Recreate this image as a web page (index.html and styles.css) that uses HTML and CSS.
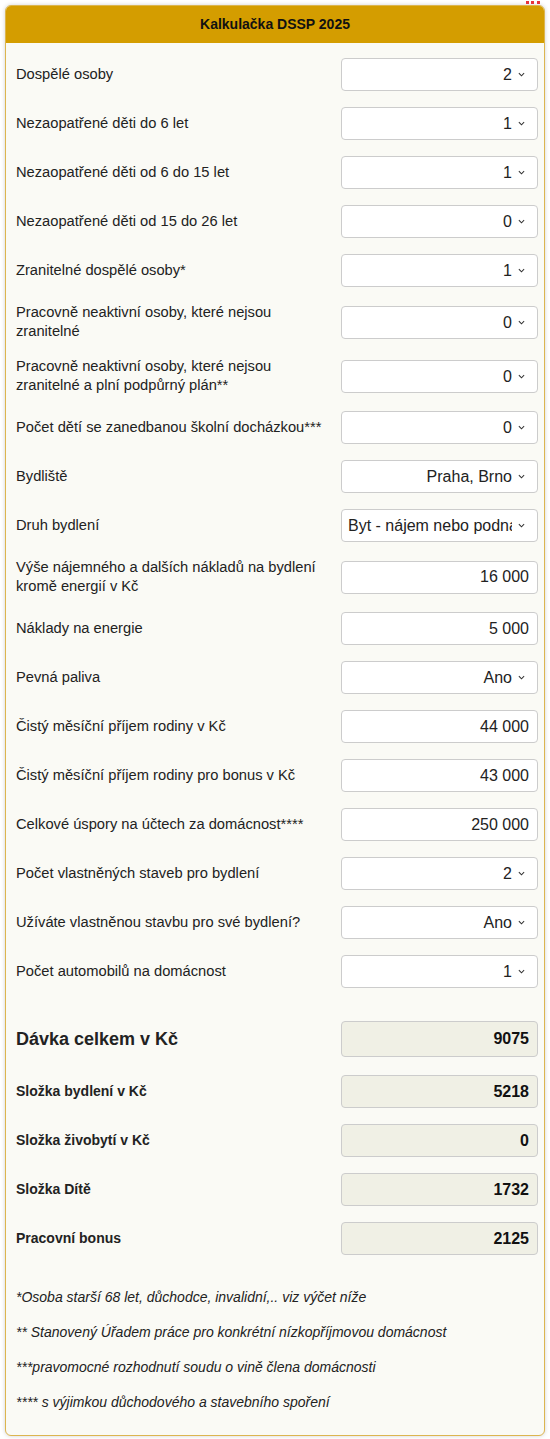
FILE: index.html
```html
<!DOCTYPE html>
<html lang="cs">
<head>
    <meta charset="UTF-8">
    <meta name="viewport" content="width=device-width, initial-scale=1.0">
    <title>Kalkulačka DSSP 2025</title>
    <link rel="stylesheet" href="styles.css">
</head>
<body>
    <div class="calc">
        <div class="marks"></div>
        <div class="calc-header">Kalkulačka DSSP 2025</div>
        <div class="calc-body">
            <div class="row">
                <label>Dospělé osoby</label>
                <div class="pick"><select><option>2</option></select><svg class="chev" viewBox="0 0 8 5"><path d="M1 1l3 3 3-3"/></svg></div>
            </div>
            <div class="row">
                <label>Nezaopatřené děti do 6 let</label>
                <div class="pick"><select><option>1</option></select><svg class="chev" viewBox="0 0 8 5"><path d="M1 1l3 3 3-3"/></svg></div>
            </div>
            <div class="row">
                <label>Nezaopatřené děti od 6 do 15 let</label>
                <div class="pick"><select><option>1</option></select><svg class="chev" viewBox="0 0 8 5"><path d="M1 1l3 3 3-3"/></svg></div>
            </div>
            <div class="row">
                <label>Nezaopatřené děti od 15 do 26 let</label>
                <div class="pick"><select><option>0</option></select><svg class="chev" viewBox="0 0 8 5"><path d="M1 1l3 3 3-3"/></svg></div>
            </div>
            <div class="row">
                <label>Zranitelné dospělé osoby*</label>
                <div class="pick"><select><option>1</option></select><svg class="chev" viewBox="0 0 8 5"><path d="M1 1l3 3 3-3"/></svg></div>
            </div>
            <div class="row">
                <label>Pracovně neaktivní osoby, které nejsou zranitelné</label>
                <div class="pick"><select><option>0</option></select><svg class="chev" viewBox="0 0 8 5"><path d="M1 1l3 3 3-3"/></svg></div>
            </div>
            <div class="row">
                <label>Pracovně neaktivní osoby, které nejsou zranitelné a plní podpůrný plán**</label>
                <div class="pick"><select><option>0</option></select><svg class="chev" viewBox="0 0 8 5"><path d="M1 1l3 3 3-3"/></svg></div>
            </div>
            <div class="row">
                <label>Počet dětí se zanedbanou školní docházkou***</label>
                <div class="pick"><select><option>0</option></select><svg class="chev" viewBox="0 0 8 5"><path d="M1 1l3 3 3-3"/></svg></div>
            </div>
            <div class="row">
                <label>Bydliště</label>
                <div class="pick"><select><option>Praha, Brno</option></select><svg class="chev" viewBox="0 0 8 5"><path d="M1 1l3 3 3-3"/></svg></div>
            </div>
            <div class="row">
                <label>Druh bydlení</label>
                <div class="pick"><select><option>Byt - nájem nebo podnájem</option></select><svg class="chev" viewBox="0 0 8 5"><path d="M1 1l3 3 3-3"/></svg></div>
            </div>
            <div class="row">
                <label>Výše nájemného a dalších nákladů na bydlení kromě energií v Kč</label>
                <input type="text" class="num" value="16 000">
            </div>
            <div class="row">
                <label>Náklady na energie</label>
                <input type="text" class="num" value="5 000">
            </div>
            <div class="row">
                <label>Pevná paliva</label>
                <div class="pick"><select><option>Ano</option></select><svg class="chev" viewBox="0 0 8 5"><path d="M1 1l3 3 3-3"/></svg></div>
            </div>
            <div class="row">
                <label>Čistý měsíční příjem rodiny v Kč</label>
                <input type="text" class="num" value="44 000">
            </div>
            <div class="row">
                <label>Čistý měsíční příjem rodiny pro bonus v Kč</label>
                <input type="text" class="num" value="43 000">
            </div>
            <div class="row">
                <label>Celkové úspory na účtech za domácnost****</label>
                <input type="text" class="num" value="250 000">
            </div>
            <div class="row">
                <label>Počet vlastněných staveb pro bydlení</label>
                <div class="pick"><select><option>2</option></select><svg class="chev" viewBox="0 0 8 5"><path d="M1 1l3 3 3-3"/></svg></div>
            </div>
            <div class="row">
                <label>Užíváte vlastněnou stavbu pro své bydlení?</label>
                <div class="pick"><select><option>Ano</option></select><svg class="chev" viewBox="0 0 8 5"><path d="M1 1l3 3 3-3"/></svg></div>
            </div>
            <div class="row">
                <label>Počet automobilů na domácnost</label>
                <div class="pick"><select><option>1</option></select><svg class="chev" viewBox="0 0 8 5"><path d="M1 1l3 3 3-3"/></svg></div>
            </div>

            <div class="results">
                <div class="row total">
                    <label>Dávka celkem v Kč</label>
                    <input type="text" class="num out" value="9075" readonly>
                </div>
                <div class="row">
                    <label>Složka bydlení v Kč</label>
                    <input type="text" class="num out" value="5218" readonly>
                </div>
                <div class="row">
                    <label>Složka živobytí v Kč</label>
                    <input type="text" class="num out" value="0" readonly>
                </div>
                <div class="row">
                    <label>Složka Dítě</label>
                    <input type="text" class="num out" value="1732" readonly>
                </div>
                <div class="row">
                    <label>Pracovní bonus</label>
                    <input type="text" class="num out" value="2125" readonly>
                </div>
            </div>

            <div class="notes">
                <p>*Osoba starší 68 let, důchodce, invalidní,.. viz výčet níže</p>
                <p>** Stanovený Úřadem práce pro konkrétní nízkopříjmovou domácnost</p>
                <p>***pravomocné rozhodnutí soudu o vině člena domácnosti</p>
                <p>**** s výjimkou důchodového a stavebního spoření</p>
            </div>
        </div>
    </div>
</body>
</html>
```

FILE: styles.css
```css
body {
    margin: 0;
    padding: 5px;
    background: #fff;
    font-family: "Liberation Sans", Arial, sans-serif;
    color: #222;
}
.calc {
    position: relative;
    border: 1px solid #dcb54f;
    border-radius: 6px;
    background: #fafaf5;
    box-shadow: 0 0 4px rgba(0, 0, 0, 0.18);
}
.marks {
    position: absolute;
    top: -5px;
    right: 4px;
    width: 14px;
    border-top: 3px dotted #e8333a;
}
.calc-header {
    background: #d49d00;
    color: #111;
    font-weight: bold;
    font-size: 14px;
    text-align: center;
    height: 37px;
    line-height: 36px;
    border-radius: 5px 5px 0 0;
}
.calc-body {
    padding: 15px 6px 8px 10px;
}
.row {
    display: flex;
    align-items: center;
    gap: 10px;
    min-height: 33px;
    margin-bottom: 16px;
}
.row label {
    flex: 1;
    font-size: 14.7px;
    line-height: 19px;
}
.pick {
    position: relative;
    width: 197px;
    height: 33px;
}
.pick select {
    width: 100%;
    height: 100%;
    appearance: none;
    -webkit-appearance: none;
    background: #fff;
    border: 1px solid #ccc;
    border-radius: 4px;
    font-family: inherit;
    font-size: 16px;
    color: #222;
    text-align: right;
    text-align-last: right;
    padding: 0 25px 0 6px;
    box-sizing: border-box;
}
.chev {
    position: absolute;
    right: 13px;
    top: 14px;
    width: 7px;
    height: 5px;
    fill: none;
    stroke: #333;
    stroke-width: 1.2;
    pointer-events: none;
}
.num {
    width: 197px;
    height: 33px;
    box-sizing: border-box;
    border: 1px solid #ccc;
    border-radius: 4px;
    background: #fff;
    font-family: inherit;
    font-size: 16px;
    color: #222;
    text-align: right;
    padding: 0 8px;
}
.results {
    margin-top: 33px;
}
.results .row label {
    font-weight: bold;
    font-size: 14px;
}
.num.out {
    background: #f0f0e5;
    font-weight: bold;
    color: #111;
}
.results .total {
    margin-bottom: 18px;
}
.results .total label {
    font-size: 18px;
}
.total .num {
    height: 36px;
}
.notes {
    padding-top: 2px;
}
.notes p {
    font-style: italic;
    font-size: 14px;
    line-height: 21px;
    margin: 14px 0;
}
```
